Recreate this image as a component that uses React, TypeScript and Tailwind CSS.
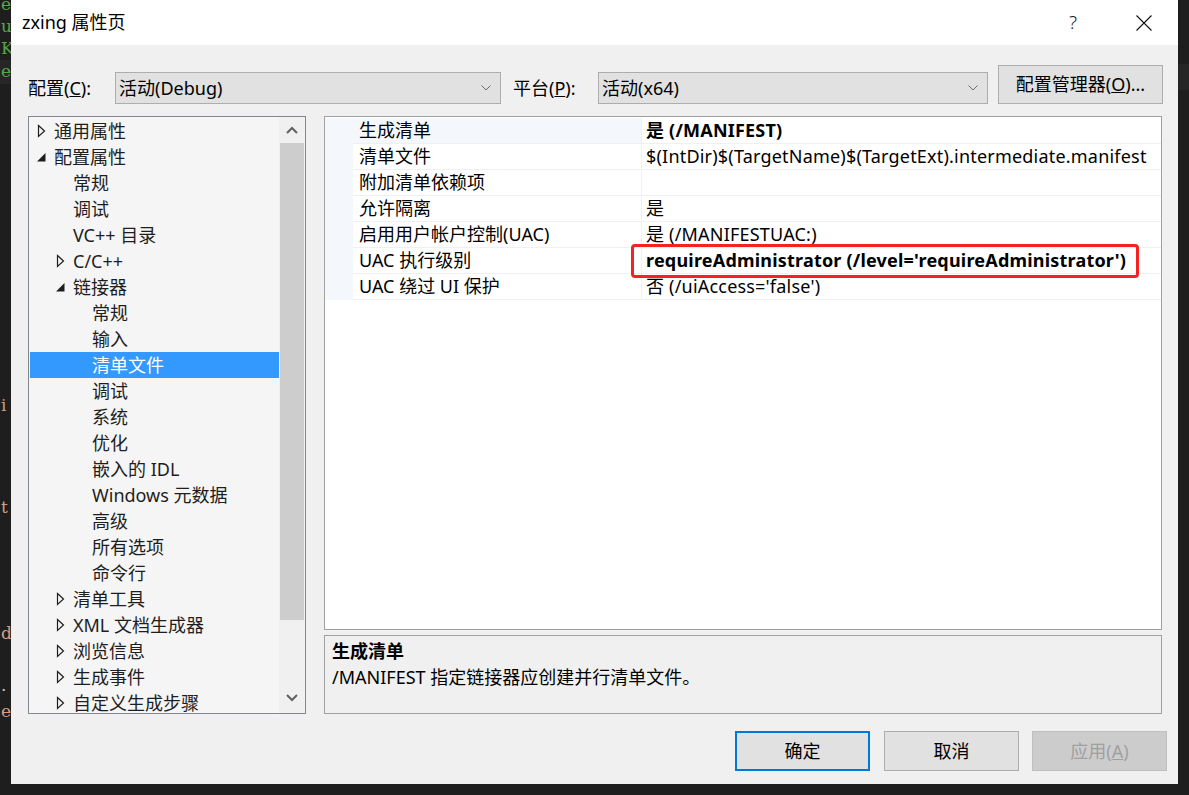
import React from "react";

const font = { fontFamily: '"Noto Sans", "Noto Sans CJK SC", sans-serif' };

type Node = { label: string; level: number; state?: "open" | "closed"; selected?: boolean };

const tree: Node[] = [
  { label: "通用属性", level: 0, state: "closed" },
  { label: "配置属性", level: 0, state: "open" },
  { label: "常规", level: 1 },
  { label: "调试", level: 1 },
  { label: "VC++ 目录", level: 1 },
  { label: "C/C++", level: 1, state: "closed" },
  { label: "链接器", level: 1, state: "open" },
  { label: "常规", level: 2 },
  { label: "输入", level: 2 },
  { label: "清单文件", level: 2, selected: true },
  { label: "调试", level: 2 },
  { label: "系统", level: 2 },
  { label: "优化", level: 2 },
  { label: "嵌入的 IDL", level: 2 },
  { label: "Windows 元数据", level: 2 },
  { label: "高级", level: 2 },
  { label: "所有选项", level: 2 },
  { label: "命令行", level: 2 },
  { label: "清单工具", level: 1, state: "closed" },
  { label: "XML 文档生成器", level: 1, state: "closed" },
  { label: "浏览信息", level: 1, state: "closed" },
  { label: "生成事件", level: 1, state: "closed" },
  { label: "自定义生成步骤", level: 1, state: "closed" },
];

const props = [
  { name: "生成清单", value: "是 (/MANIFEST)", bold: true, current: true },
  { name: "清单文件", value: "$(IntDir)$(TargetName)$(TargetExt).intermediate.manifest" },
  { name: "附加清单依赖项", value: "" },
  { name: "允许隔离", value: "是" },
  { name: "启用用户帐户控制(UAC)", value: "是 (/MANIFESTUAC:)" },
  { name: "UAC 执行级别", value: "requireAdministrator (/level='requireAdministrator')", bold: true, marked: true },
  { name: "UAC 绕过 UI 保护", value: "否 (/uiAccess='false')" },
];

const code = [
  { h: 22, c: "e", color: "text-[#57a64a]" },
  { h: 22, c: "u", color: "text-[#57a64a]" },
  { h: 22, c: "K", color: "text-[#57a64a]" },
  { h: 24, c: "e", color: "text-[#57a64a]", band: true },
  { h: 311, c: "", color: "" },
  { h: 22, c: "i", color: "text-[#c8a080]" },
  { h: 80, c: "", color: "" },
  { h: 22, c: "t", color: "text-[#c8a080]" },
  { h: 104, c: "", color: "" },
  { h: 22, c: "d", color: "text-[#d69d85]" },
  { h: 30, c: "", color: "" },
  { h: 22, c: ".", color: "text-[#c8c8c8]" },
  { h: 4, c: "", color: "" },
  { h: 22, c: "e", color: "text-[#d69d85]" },
];

function Chevron() {
  return (
    <svg width="10" height="6" viewBox="0 0 10 6" className="shrink-0">
      <path d="M0.5 0.5 L5 5 L9.5 0.5" fill="none" stroke="#6b6b6b" strokeWidth="1" />
    </svg>
  );
}

function Dropdown({ text, w }: { text: string; w: string }) {
  return (
    <div className={`${w} h-[32px] mt-[7px] flex items-center justify-between bg-[#e1e1e1] border border-[#adadad] pl-[3px] pr-[9px] text-[18px] text-black`}>
      <span>{text}</span>
      <Chevron />
    </div>
  );
}

function Toggle({ state }: { state?: "open" | "closed" }) {
  if (state === "closed")
    return (
      <svg width="9" height="14" viewBox="0 0 9 14" className="shrink-0">
        <path d="M1.5 1.5 L7.5 7 L1.5 12.5 Z" fill="none" stroke="#1e1e1e" strokeWidth="1.2" />
      </svg>
    );
  if (state === "open")
    return (
      <svg width="9" height="14" viewBox="0 0 9 14" className="shrink-0">
        <path d="M8.5 3 L8.5 11.5 L0 11.5 Z" fill="#1e1e1e" />
      </svg>
    );
  return <span className="w-[9px] shrink-0" />;
}

export default function App() {
  return (
    <div className="w-[1189px] h-[795px] bg-[#1e1e1e] flex overflow-hidden" style={font}>
      {/* editor behind the dialog */}
      <div className="w-[11px] shrink-0 flex flex-col -mt-[6px] overflow-hidden" style={{ fontFamily: '"DejaVu Serif", serif' }}>
        {code.map((l, i) => (
          <div
            key={i}
            className={`shrink-0 flex items-center text-[17px] pl-[1px] ${l.color} ${l.band ? "bg-[#262626]" : ""}`}
            style={{ height: l.h }}
          >
            {l.c}
          </div>
        ))}
      </div>

      <div className="w-[1167px] h-[784px] shrink-0 bg-[#f0f0f0] flex flex-col">
        {/* title bar */}
        <div className="h-[45px] bg-white flex items-center pl-[11px] pr-[26px] text-black">
          <span className="text-[18px] -mt-[1px]">zxing 属性页</span>
          <span className="ml-auto text-[19px] font-light text-[#222] mr-[59px]">?</span>
          <svg width="16" height="16" viewBox="0 0 16 16">
            <path d="M0.5 0.5 L15.5 15.5 M15.5 0.5 L0.5 15.5" stroke="#111" strokeWidth="1.1" />
          </svg>
        </div>

        {/* configuration row */}
        <div className="flex items-start pl-[17px] pt-[20px] text-[18px] text-black">
          <span className="w-[87px] mt-[10px]">
            配置(<u>C</u>):
          </span>
          <Dropdown text="活动(Debug)" w="w-[386px]" />
          <span className="ml-[12px] w-[85px] mt-[10px]">
            平台(<u>P</u>):
          </span>
          <Dropdown text="活动(x64)" w="w-[390px]" />
          <button className="ml-[10px] w-[165px] h-[39px] bg-[#e1e1e1] border border-[#adadad] text-[18px]">
            配置管理器(<u>O</u>)...
          </button>
        </div>

        {/* main area */}
        <div className="flex pl-[17px] pt-[12px] gap-[18px]">
          {/* tree */}
          <div className="w-[278px] h-[598px] border border-[#828790] bg-[#f5f5f5] flex overflow-hidden">
            <div className="flex-1 flex flex-col pt-[1px] pl-[1px] overflow-hidden">
              {tree.map((n, i) => (
                <div
                  key={i}
                  className={`h-[26px] shrink-0 flex items-center gap-[8px] text-[18px] whitespace-nowrap ${n.selected ? "bg-[#3399ff] text-white" : "text-[#1e1e1e]"}`}
                  style={{ paddingLeft: 7 + n.level * 19 }}
                >
                  <Toggle state={n.state} />
                  <span>{n.label}</span>
                </div>
              ))}
            </div>
            <div className="w-[26px] bg-[#f0f0f0] flex flex-col items-center">
              <div className="h-[26px] flex items-center justify-center">
                <svg width="12" height="8" viewBox="0 0 12 8">
                  <path d="M1 7 L6 2 L11 7" fill="none" stroke="#606060" strokeWidth="2" />
                </svg>
              </div>
              <div className="w-[24px] h-[477px] bg-[#cdcdcd]" />
              <div className="flex-1" />
              <div className="h-[30px] flex items-center justify-center">
                <svg width="12" height="8" viewBox="0 0 12 8">
                  <path d="M1 1 L6 6 L11 1" fill="none" stroke="#606060" strokeWidth="2" />
                </svg>
              </div>
            </div>
          </div>

          {/* property grid + description */}
          <div className="w-[838px] flex flex-col gap-[5px]">
            <div className="h-[514px] border border-[#a0a0a0] bg-white flex flex-col pt-[1px]">
              {props.map((p, i) => (
                <div key={i} className="h-[26px] flex text-[18px] text-black">
                  <div className="w-[28px] shrink-0 bg-[#f4f7fc]" />
                  <div
                    className={`w-[289px] shrink-0 flex items-center pl-[6px] border-b border-r border-[#f0f0f0] whitespace-nowrap ${p.current ? "bg-[#f4f7fc]" : ""}`}
                  >
                    {p.name}
                  </div>
                  <div
                    className={`relative flex-1 flex items-center pl-[4px] border-b border-[#f0f0f0] whitespace-nowrap tracking-[0.2px] ${p.bold ? "font-bold" : ""}`}
                  >
                    {p.value}
                    {p.marked && (
                      <div className="absolute left-[-11px] top-[-4px] w-[508px] h-[34px] border-[3px] border-[#f52222] rounded-[4px]" />
                    )}
                  </div>
                </div>
              ))}
            </div>
            <div className="h-[79px] border border-[#a0a0a0] bg-[#f0f0f0] px-[7px] pt-[2px] text-[18px] text-black leading-[26px]">
              <div className="font-bold">生成清单</div>
              <div>/MANIFEST 指定链接器应创建并行清单文件。</div>
            </div>
          </div>
        </div>

        {/* buttons */}
        <div className="flex justify-end pr-[11px] pt-[17px] text-[18px]">
          <button className="w-[135px] h-[40px] bg-[#e1e1e1] border-2 border-[#0078d7] text-black">确定</button>
          <button className="ml-[14px] w-[135px] h-[40px] bg-[#e1e1e1] border border-[#adadad] text-black">取消</button>
          <button className="ml-[13px] w-[135px] h-[40px] bg-[#cccccc] border border-[#bfbfbf] text-[#a0a0a0]">
            应用(<u>A</u>)
          </button>
        </div>
      </div>

      <div className="flex-1 flex flex-col">
        <div className="h-[64px]" />
        <div className="h-[26px] bg-[#262626]" />
      </div>
    </div>
  );
}
